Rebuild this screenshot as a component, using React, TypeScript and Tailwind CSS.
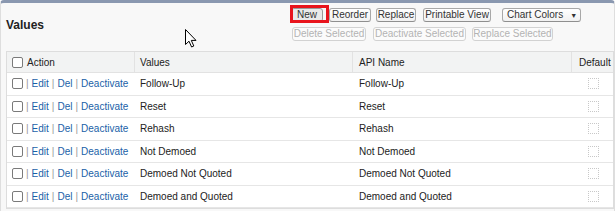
import React from "react";

const rows = [
  "Follow-Up",
  "Reset",
  "Rehash",
  "Not Demoed",
  "Demoed Not Quoted",
  "Demoed and Quoted",
];

function Btn({ label, w, disabled, active }: { label: string; w: string; disabled?: boolean; active?: boolean }) {
  return (
    <div
      className={`${w} h-[14px] flex items-center justify-center rounded-[3px] border text-[10px] leading-none whitespace-nowrap ${
        disabled
          ? "border-[#d2d2d2] text-[#b3b3b3] bg-[#fbfbfb]"
          : active
          ? "border-[#9a9a9a] text-[#333] bg-[#e9e9e9]"
          : "border-[#a8a8a8] border-b-[#8f8f8f] text-[#333] bg-gradient-to-b from-white to-[#f1f1f1]"
      }`}
    >
      {label}
    </div>
  );
}

function Check() {
  return <div className="w-[11px] h-[11px] rounded-[2px] border border-[#7a7a7a] bg-white shrink-0" />;
}

export default function App() {
  return (
    <div className="relative w-[616px] h-[211px] overflow-hidden bg-white font-['Liberation_Sans',Arial,sans-serif]">
      <div className="w-[615px] h-[214px] rounded-t-[4px] border-t-[3px] border-t-[#8a98b0] border-x border-x-[#dedede] bg-[#f8f8f8]">
        <div className="flex h-[48px]">
          <div className="w-[290px] pl-[5px] pt-[13px] text-[12px] font-bold text-[#222]">Values</div>
          <div className="flex flex-col pt-[5px] gap-[5px]">
            <div className="flex">
              <Btn label="New" w="w-[32px]" active />
              <div className="ml-[6px]"><Btn label="Reorder" w="w-[42px]" /></div>
              <div className="ml-[5px]"><Btn label="Replace" w="w-[40px]" /></div>
              <div className="ml-[7px]"><Btn label="Printable View" w="w-[68px]" /></div>
              <div className="ml-[11px] w-[79px] h-[14px] flex items-center rounded-[3px] border border-[#a8a8a8] border-b-[#8f8f8f] bg-gradient-to-b from-white to-[#f1f1f1] text-[10px] leading-none text-[#333] pl-[4px]">
                <span>Chart Colors</span>
                <span className="ml-[7px] text-[7px]">▼</span>
              </div>
            </div>
            <div className="flex ml-[1px]">
              <Btn label="Delete Selected" w="w-[74px]" disabled />
              <div className="ml-[7px]"><Btn label="Deactivate Selected" w="w-[93px]" disabled /></div>
              <div className="ml-[6px]"><Btn label="Replace Selected" w="w-[81px]" disabled /></div>
            </div>
          </div>
        </div>
        <div className="ml-[5px] w-[608px] border border-[#dddddd] bg-white text-[10px] text-[#222]">
          <div className="flex h-[21px] bg-[#f2f3f3] border-b border-[#e2e2e2]">
            <div className="w-[128px] flex items-center pl-[5px] border-r border-[#e2e2e2]">
              <Check />
              <span className="ml-[4px]">Action</span>
            </div>
            <div className="w-[218px] flex items-center pl-[5px] border-r border-[#e2e2e2]">Values</div>
            <div className="w-[219px] flex items-center pl-[6px] border-r border-[#e2e2e2]">API Name</div>
            <div className="flex-1 flex items-center pl-[7px] whitespace-nowrap">Default</div>
          </div>
          {rows.map((r) => (
            <div key={r} className="flex h-[22.5px] border-b border-[#e6e6e6]">
              <div className="w-[128px] flex items-center pl-[5px] whitespace-nowrap">
                <Check />
                <span className="ml-[3px] text-[#999]">|</span>
                <span className="ml-[3px] text-[#1a5fa8]">Edit</span>
                <span className="ml-[3px] text-[#999]">|</span>
                <span className="ml-[3px] text-[#1a5fa8]">Del</span>
                <span className="ml-[3px] text-[#999]">|</span>
                <span className="ml-[3px] text-[#1a5fa8]">Deactivate</span>
              </div>
              <div className="w-[218px] flex items-center pl-[5px]">{r}</div>
              <div className="w-[219px] flex items-center pl-[6px]">{r}</div>
              <div className="flex-1 flex items-center pl-[16px]">
                <div className="w-[11px] h-[11px] border border-dotted border-[#c8c8c8]" />
              </div>
            </div>
          ))}
        </div>
      </div>
      <div className="absolute left-[290px] top-[5px] w-[39px] h-[18px] border-[3px] border-[#e8141c]" />
      <svg className="absolute left-[185px] top-[29px]" width="13" height="19" viewBox="0 0 13 19">
        <path d="M0.5 0.5 L0.5 15.5 L4 12.2 L6.6 18 L8.8 17 L6.3 11.4 L11 11.4 Z" fill="white" stroke="black" strokeWidth="1" strokeLinejoin="miter" />
      </svg>
    </div>
  );
}
